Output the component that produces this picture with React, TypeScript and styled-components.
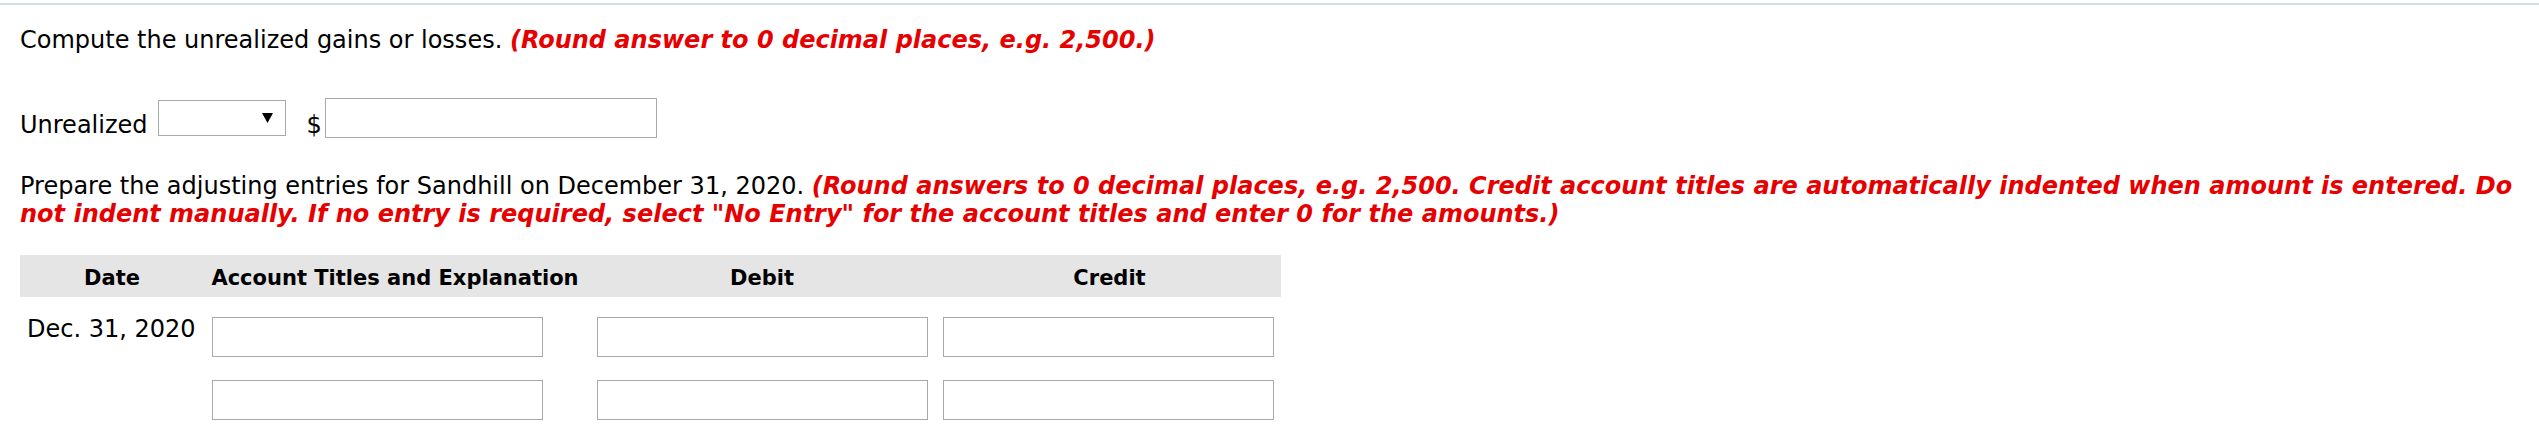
import React from 'react';
import styled, {createGlobalStyle} from 'styled-components';

const GlobalStyle = createGlobalStyle`
    html, body {
        margin: 0;
        padding: 0;
        background: #fff;
    }
    body {
        font-family: Verdana, "DejaVu Sans", sans-serif;
        color: #000;
    }
`;

const Page = styled.div`
    margin-top: 3px;
    border-top: 2px solid #d6dce3;
    padding: 0 20px;
    font-size: 24px;
    line-height: 28.5px;
`;

const Prompt = styled.p<{ $top: number }>`
    margin: ${props => props.$top}px 0 0;
`;

const Hint = styled.em`
    color: #e60000;
    font-weight: bold;
`;

const AnswerRow = styled.div`
    display: flex;
    align-items: center;
    height: 40px;
    margin-top: 43px;
`;

const Label = styled.span`
    align-self: flex-end;
    line-height: 28px;
    margin-bottom: -1px;
`;

const SelectBox = styled.div`
    box-sizing: border-box;
    width: 128px;
    height: 36px;
    margin-left: 10px;
    border: 1px solid #aaa;
    background: #fff;
    display: flex;
    align-items: center;
    justify-content: flex-end;
    padding-right: 12px;
`;

const Dollar = styled.span`
    align-self: flex-end;
    line-height: 28px;
    margin: 0 3px -1px 21px;
`;

const Field = styled.div<{ $width: number }>`
    box-sizing: border-box;
    width: ${props => props.$width}px;
    height: 40px;
    border: 1px solid #a9a9a9;
    background: #fff;
`;

const Table = styled.div`
    margin-top: 26px;
    display: grid;
    grid-template-columns: 184px 382px 352px 343px;
    width: 1261px;
`;

const HeadCell = styled.div`
    background: #e5e5e5;
    height: 42px;
    box-sizing: border-box;
    padding-top: 5px;
    line-height: 37px;
    font-size: 21px;
    font-weight: bold;
    text-align: center;
    white-space: nowrap;
`;

const BodyCell = styled.div<{ $inset: number; $top: number }>`
    padding: ${props => props.$top}px 0 0 ${props => props.$inset}px;
`;

const DateText = styled.div`
    margin-top: -2px;
    white-space: nowrap;
`;

const Arrow = () => (
    <svg width="11" height="10" viewBox="0 0 11 10" aria-hidden="true">
        <path d="M0 0 H11 L5.5 10 Z" fill="#000"/>
    </svg>
);

const rows = [
    {date: 'Dec. 31, 2020', top: 20},
    {date: '', top: 23},
];

const App: React.FC = () => {
    return (
        <>
            <GlobalStyle/>
            <Page>
                <Prompt $top={21}>
                    Compute the unrealized gains or losses.{' '}
                    <Hint>(Round answer to 0 decimal places, e.g. 2,500.)</Hint>
                </Prompt>

                <AnswerRow>
                    <Label>Unrealized</Label>
                    <SelectBox>
                        <Arrow/>
                    </SelectBox>
                    <Dollar>$</Dollar>
                    <Field $width={332}/>
                </AnswerRow>

                <Prompt $top={34}>
                    Prepare the adjusting entries for Sandhill on December 31, 2020.{' '}
                    <Hint>
                        (Round answers to 0 decimal places, e.g. 2,500. Credit account titles are
                        automatically indented when amount is entered. Do not indent manually. If no
                        entry is required, select "No Entry" for the account titles and enter 0 for the
                        amounts.)
                    </Hint>
                </Prompt>

                <Table>
                    <HeadCell>Date</HeadCell>
                    <HeadCell>Account Titles and Explanation</HeadCell>
                    <HeadCell>Debit</HeadCell>
                    <HeadCell>Credit</HeadCell>

                    {rows.map((row, i) => (
                        <React.Fragment key={i}>
                            <BodyCell $inset={7} $top={row.top}>
                                <DateText>{row.date}</DateText>
                            </BodyCell>
                            <BodyCell $inset={8} $top={row.top}>
                                <Field $width={331}/>
                            </BodyCell>
                            <BodyCell $inset={11} $top={row.top}>
                                <Field $width={331}/>
                            </BodyCell>
                            <BodyCell $inset={5} $top={row.top}>
                                <Field $width={331}/>
                            </BodyCell>
                        </React.Fragment>
                    ))}
                </Table>
            </Page>
        </>
    );
};

export default App;
